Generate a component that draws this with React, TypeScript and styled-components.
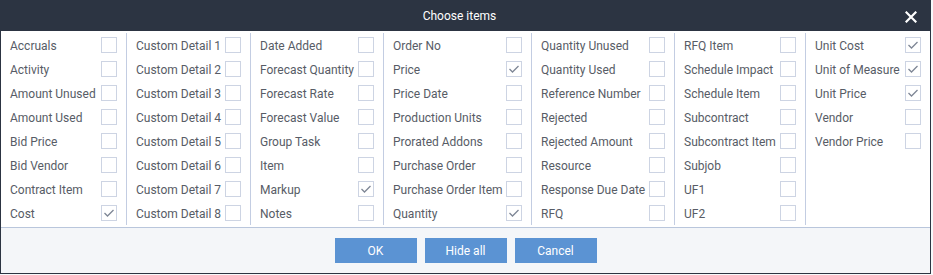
import React from 'react';
import styled, { createGlobalStyle } from 'styled-components';

const GlobalStyle = createGlobalStyle`
  html, body {
    margin: 0;
    padding: 0;
    background: #f7f8fa;
  }
  body {
    font-family: Roboto, "Liberation Sans", Arial, sans-serif;
  }
`;

interface Item {
  label: string;
  checked?: boolean;
}

interface Column {
  width?: number;
  items: Item[];
}

const columns: Column[] = [
  {
    width: 126,
    items: [
      { label: 'Accruals' },
      { label: 'Activity' },
      { label: 'Amount Unused' },
      { label: 'Amount Used' },
      { label: 'Bid Price' },
      { label: 'Bid Vendor' },
      { label: 'Contract Item' },
      { label: 'Cost', checked: true },
    ],
  },
  {
    width: 124,
    items: [1, 2, 3, 4, 5, 6, 7, 8].map((n) => ({ label: `Custom Detail ${n}` })),
  },
  {
    width: 133,
    items: [
      { label: 'Date Added' },
      { label: 'Forecast Quantity' },
      { label: 'Forecast Rate' },
      { label: 'Forecast Value' },
      { label: 'Group Task' },
      { label: 'Item' },
      { label: 'Markup', checked: true },
      { label: 'Notes' },
    ],
  },
  {
    width: 148,
    items: [
      { label: 'Order No' },
      { label: 'Price', checked: true },
      { label: 'Price Date' },
      { label: 'Production Units' },
      { label: 'Prorated Addons' },
      { label: 'Purchase Order' },
      { label: 'Purchase Order Item' },
      { label: 'Quantity', checked: true },
    ],
  },
  {
    width: 143,
    items: [
      { label: 'Quantity Unused' },
      { label: 'Quantity Used' },
      { label: 'Reference Number' },
      { label: 'Rejected' },
      { label: 'Rejected Amount' },
      { label: 'Resource' },
      { label: 'Response Due Date' },
      { label: 'RFQ' },
    ],
  },
  {
    width: 131,
    items: [
      { label: 'RFQ Item' },
      { label: 'Schedule Impact' },
      { label: 'Schedule Item' },
      { label: 'Subcontract' },
      { label: 'Subcontract Item' },
      { label: 'Subjob' },
      { label: 'UF1' },
      { label: 'UF2' },
    ],
  },
  {
    items: [
      { label: 'Unit Cost', checked: true },
      { label: 'Unit of Measure', checked: true },
      { label: 'Unit Price', checked: true },
      { label: 'Vendor' },
      { label: 'Vendor Price' },
    ],
  },
];

export default function App() {
  return (
    <>
      <GlobalStyle />
      <Dialog>
        <Header>
          <Title>Choose items</Title>
          <CloseButton aria-label="Close">
            <svg width="12" height="12" viewBox="0 0 12 12">
              <path
                d="M1.5 1.5 L10.5 10.5 M10.5 1.5 L1.5 10.5"
                stroke="#ffffff"
                strokeWidth="2.2"
                strokeLinecap="square"
              />
            </svg>
          </CloseButton>
        </Header>
        <Body>
          {columns.map((col, i) => (
            <ItemColumn key={i} $width={col.width}>
              {col.items.map((item) => (
                <Row key={item.label}>
                  <Label>{item.label}</Label>
                  <Box>
                    {item.checked && (
                      <svg width="14" height="14" viewBox="0 0 14 14">
                        <polyline
                          points="2.5,7 5.5,10 11.5,4"
                          fill="none"
                          stroke="#7e8695"
                          strokeWidth="1.3"
                        />
                      </svg>
                    )}
                  </Box>
                </Row>
              ))}
            </ItemColumn>
          ))}
        </Body>
        <Footer>
          <Button>OK</Button>
          <Button>Hide all</Button>
          <Button>Cancel</Button>
        </Footer>
      </Dialog>
    </>
  );
}

const Dialog = styled.div`
  width: 931px;
  height: 274px;
  box-sizing: border-box;
  border: 1px solid #2c3442;
  background: #ffffff;
  display: flex;
  flex-direction: column;
`;

const Header = styled.div`
  height: 30px;
  flex: none;
  background: #2c3442;
  display: flex;
  align-items: center;
  position: relative;
`;

const Title = styled.div`
  flex: 1;
  text-align: center;
  color: #ffffff;
  font-size: 12px;
  padding-right: 12px;
`;

const CloseButton = styled.button`
  position: absolute;
  right: 13px;
  top: 10px;
  width: 12px;
  height: 12px;
  padding: 0;
  border: none;
  background: none;
  display: flex;
  cursor: pointer;
`;

const Body = styled.div`
  height: 197px;
  flex: none;
  box-sizing: border-box;
  padding: 2px 0;
  border-bottom: 1px solid #b9c6dc;
  display: flex;
`;

const ItemColumn = styled.div<{ $width?: number }>`
  box-sizing: border-box;
  ${(p) =>
    p.$width
      ? `width: ${p.$width}px; flex: none; border-right: 1px solid #c3cde2;`
      : 'flex: 1;'}
  display: flex;
  flex-direction: column;
`;

const Row = styled.div`
  height: 24px;
  display: flex;
  align-items: center;
  justify-content: space-between;
  padding: 0 9px 0 9px;
`;

const Label = styled.span`
  font-size: 12px;
  color: #575c66;
  white-space: nowrap;
  margin-top: 2px;
`;

const Box = styled.span`
  width: 16px;
  height: 16px;
  box-sizing: border-box;
  border: 1px solid #cdd4e3;
  background: #ffffff;
  flex: none;
  display: flex;
  align-items: center;
  justify-content: center;
`;

const Footer = styled.div`
  flex: 1;
  background: #f4f6f9;
  display: flex;
  justify-content: center;
  align-items: flex-start;
  gap: 8px;
  padding-top: 10px;
`;

const Button = styled.button`
  width: 82px;
  height: 25px;
  border: none;
  background: #5b93d3;
  color: #ffffff;
  font-family: Roboto, "Liberation Sans", Arial, sans-serif;
  font-size: 12px;
  cursor: pointer;
`;
